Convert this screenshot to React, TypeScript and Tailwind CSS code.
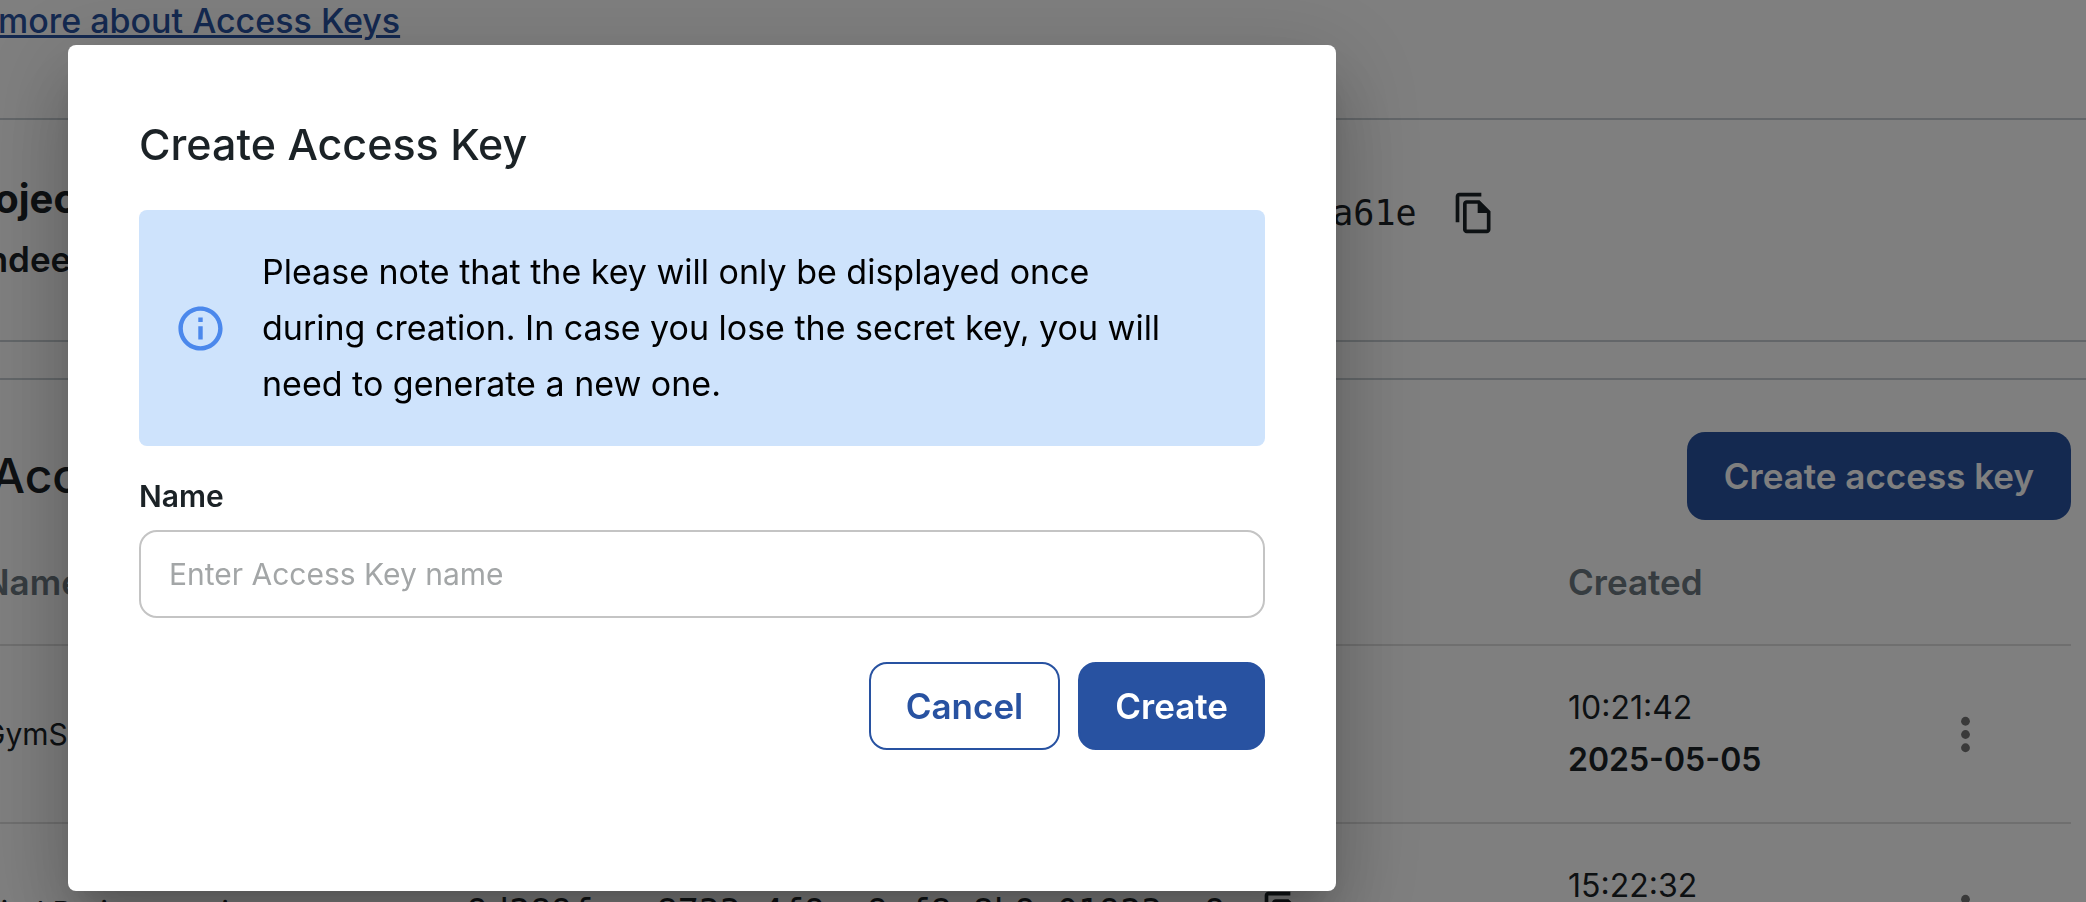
import { useState } from 'react';

interface AccessKey {
  name: string;
  id: string;
  time: string;
  date: string;
}

const accessKeys: AccessKey[] = [
  {
    name: 'GymScheduler',
    id: '1c84e7b2-52d6-4b0e-8f3d-7a95c0e418d3',
    time: '10:21:42',
    date: '2025-05-05',
  },
  {
    name: 'Find Project version',
    id: '9d289fac-8733-4f9c-9cf8-8b9c01923ac9',
    time: '15:22:32',
    date: '2025-04-28',
  },
];

function CopyIcon() {
  return (
    <svg width="44" height="44" viewBox="0 0 24 24" fill="currentColor" aria-hidden="true">
      <path d="M16 1H4c-1.1 0-2 .9-2 2v14h2V3h12V1zm-1 4H8c-1.1 0-1.99.9-1.99 2L6 21c0 1.1.89 2 1.99 2H19c1.1 0 2-.9 2-2V11l-6-6zM8 21V7h6v5h5v9H8z" />
    </svg>
  );
}

function MoreIcon() {
  return (
    <svg width="53" height="53" viewBox="0 0 24 24" fill="currentColor" aria-hidden="true">
      <circle cx="12" cy="6" r="2" />
      <circle cx="12" cy="12" r="2" />
      <circle cx="12" cy="18" r="2" />
    </svg>
  );
}

function InfoIcon() {
  return (
    <svg width="53" height="53" viewBox="0 0 24 24" fill="currentColor" className="shrink-0" aria-hidden="true">
      <path d="M11 7h2v2h-2V7zm0 4h2v6h-2v-6zm1-9C6.48 2 2 6.48 2 12s4.48 10 10 10 10-4.48 10-10S17.52 2 12 2zm0 18c-4.41 0-8-3.59-8-8s3.59-8 8-8 8 3.59 8 8-3.59 8-8 8z" />
    </svg>
  );
}

function KeyId({ value }: { value: string }) {
  return (
    <div className="flex items-center gap-[35px]">
      <span className="font-['DejaVu_Sans_Mono',monospace] text-[35px] leading-[44px]">{value}</span>
      <button type="button" aria-label="Copy">
        <CopyIcon />
      </button>
    </div>
  );
}

function CreateKeyDialog() {
  const [name, setName] = useState('');

  return (
    <div className="fixed inset-0 flex items-start bg-black/50 pt-[45px] pl-[68px]">
      <form
        role="dialog"
        aria-labelledby="dialog-title"
        onSubmit={(e) => e.preventDefault()}
        className="flex w-full max-w-[1268px] flex-col rounded-lg bg-white px-[71px] pt-[71px] pb-[141px] shadow-[0_22px_30px_-14px_rgba(0,0,0,0.2),0_48px_76px_6px_rgba(0,0,0,0.14),0_18px_92px_16px_rgba(0,0,0,0.12)]"
      >
        <h2 id="dialog-title" className="text-[43px] leading-[56px] font-medium">
          Create Access Key
        </h2>

        {/* Notice */}
        <div className="mt-[38px] flex items-center gap-[35px] rounded-lg bg-[#cee3fc] py-[34px] pr-20 pl-[35px] text-[#4b88ec]">
          <InfoIcon />
          <p className="text-[34px] leading-[56px] text-black">
            Please note that the key will only be displayed once during creation. In case you lose the
            secret key, you will need to generate a new one.
          </p>
        </div>

        <label htmlFor="key-name" className="mt-[30px] text-[30px] leading-[40px] font-semibold">
          Name
        </label>
        <input
          id="key-name"
          type="text"
          value={name}
          onChange={(e) => setName(e.target.value)}
          placeholder="Enter Access Key name"
          className="mt-[14px] rounded-[18px] border-2 border-[#c4c4c4] px-7 py-5 text-[30px] leading-[44px] placeholder:text-[#a3a6a7]"
        />

        {/* Actions */}
        <div className="mt-11 flex justify-end gap-[18px] text-[35px] leading-[44px] font-semibold">
          <button type="button" className="rounded-[18px] border-2 border-[#2852a1] px-[35px] py-5 text-[#2852a1]">
            Cancel
          </button>
          <button type="submit" className="rounded-[18px] border-2 border-[#2852a1] bg-[#2852a1] px-[35px] py-5 text-white">
            Create
          </button>
        </div>
      </form>
    </div>
  );
}

export default function App() {
  return (
    <div className="h-screen overflow-hidden bg-white font-['Inter',sans-serif] text-[#1b2226]">
      <main className="-ml-[104px]">
        <p className="pb-[76px] text-[34px] leading-[42px] font-medium">
          <a href="#docs" className="text-[#2852a1] underline decoration-[3px] underline-offset-2">
            Learn more about Access Keys
          </a>
        </p>

        {/* Project */}
        <section className="flex items-start border-y-2 border-[#c6cdd2] pt-[49px] pb-[51px] pl-[57px]">
          <div className="w-[705px] shrink-0 leading-[60px]">
            <h2 className="text-[40px] font-bold">Project</h2>
            <p className="text-[35px] font-semibold">randeep</p>
          </div>
          <div className="pt-[22px]">
            <KeyId value="3f7b92c4-6e1d-4a85-b2f9-04c8d7e9a61e" />
          </div>
        </section>

        {/* Access keys */}
        <section className="mt-9 border-t-2 border-[#c6cdd2] pt-[52px] pr-[15px] pl-[87px]">
          <div className="flex items-center justify-between pl-2">
            <h2 className="text-[48px] leading-[60px] font-medium">Access Keys</h2>
            <button
              type="button"
              className="rounded-[18px] bg-[#2852a1] px-[37px] py-[22px] text-[35px] leading-[44px] font-semibold text-white"
            >
              Create access key
            </button>
          </div>

          <table className="w-full table-fixed border-separate border-spacing-0 text-left">
            <thead>
              <tr className="text-[35px] text-[#6c7880]">
                <th className="h-[126px] w-[484px] border-b-2 border-[#dedede] font-semibold">Name</th>
                <th className="border-b-2 border-[#dedede] font-semibold">Access Key</th>
                <th className="w-[371px] border-b-2 border-[#dedede] font-semibold">Created</th>
                <th className="w-[132px] border-b-2 border-[#dedede]" aria-label="Actions" />
              </tr>
            </thead>
            <tbody>
              {accessKeys.map(({ name, id, time, date }) => (
                <tr key={id}>
                  <td className="h-[178px] border-b-2 border-[#dedede] text-[30px]">{name}</td>
                  <td className="border-b-2 border-[#dedede]">
                    <KeyId value={id} />
                  </td>
                  <td className="border-b-2 border-[#dedede] text-[32px] leading-[52px]">
                    <p>{time}</p>
                    <p className="font-semibold">{date}</p>
                  </td>
                  <td className="border-b-2 border-[#dedede]">
                    <button type="button" aria-label="More" className="block text-[#757575]">
                      <MoreIcon />
                    </button>
                  </td>
                </tr>
              ))}
            </tbody>
          </table>
        </section>
      </main>

      <CreateKeyDialog />
    </div>
  );
}
